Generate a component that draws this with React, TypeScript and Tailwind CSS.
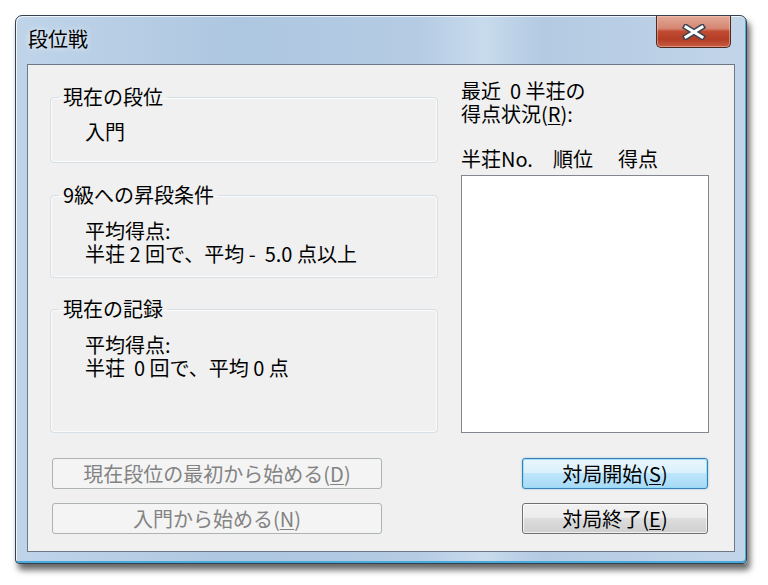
const font = "font-['Noto_Sans_CJK_JP','Liberation_Sans',sans-serif]";

function Mn({ c }: { c: string }) {
  return <span className="underline underline-offset-[2px] decoration-1">{c}</span>;
}

function CloseButton() {
  return (
    <div className="mr-[15px] w-[75px] h-[32px] rounded-b-[5px] border border-t-0 border-[#4a2a22] bg-[linear-gradient(to_bottom,#e3a897_0%,#d58672_40%,#c14a32_50%,#b43d25_75%,#c85c44_100%)] shadow-[inset_0_0_0_1px_rgba(255,210,190,0.45)] flex items-center justify-center">
      <svg width="24" height="16" viewBox="0 0 24 16">
        <path d="M4 3 L20 13 M20 3 L4 13" stroke="#3d4452" strokeWidth="6" strokeLinecap="square" fill="none" />
        <path d="M4 3 L20 13 M20 3 L4 13" stroke="#ffffff" strokeWidth="3" strokeLinecap="square" fill="none" />
      </svg>
    </div>
  );
}

function Group({ title, h, mt, children }: { title: string; h: string; mt: string; children: React.ReactNode }) {
  return (
    <fieldset className={`${h} border border-[#d5dfe5] rounded-[4px] shadow-[inset_0_0_0_1px_rgba(255,255,255,0.7)]`}>
      <legend className="ml-[8px] px-[4px] text-[20px] leading-[22px]">{title}</legend>
      <div className={`${mt} pl-[34px] text-[20px] leading-[23px] whitespace-pre`}>{children}</div>
    </fieldset>
  );
}

export default function App() {
  return (
    <div className={`w-[768px] h-[585px] bg-white pl-[15px] pt-[15px] text-black ${font}`}>
      <div className="w-[732px] h-[549px] flex flex-col rounded-t-[7px] rounded-b-[4px] border border-[#34414e] bg-[linear-gradient(to_right,#bfd4e9_0%,#aec7e0_30%,#b4cbe3_55%,#c8dbed_64%,#b3cae2_72%,#c2d5e9_100%)] shadow-[3px_6px_6px_rgba(0,0,0,0.6),inset_-1px_-2px_0_#4aa9d9,inset_1px_1px_0_rgba(255,255,255,0.75)]">
        <div className="h-[48px] flex items-start justify-between">
          <div className="pl-[12px] pt-[11px] text-[20px] leading-[24px] text-black [text-shadow:0_0_6px_rgba(255,255,255,0.9)]">段位戦</div>
          <CloseButton />
        </div>
        <div className="flex-1 mx-[11px] mb-[11px] border border-[#6b7886] bg-[#f0f0f0] pl-[22px] pt-[16px]">
          <div className="flex">
            <div className="w-[388px] mt-[5px] flex flex-col">
              <Group title="現在の段位" h="h-[77px]" mt="mt-[12px]">入門</Group>
              <div className="h-[21px]" />
              <Group title="9級への昇段条件" h="h-[94px]" mt="mt-[13px]">
                <div>平均得点:</div>
                <div>半荘 2 回で、平均 -&nbsp;&nbsp;5.0 点以上</div>
              </Group>
              <div className="h-[20px]" />
              <Group title="現在の記録" h="h-[135px]" mt="mt-[13px]">
                <div>平均得点:</div>
                <div>半荘&nbsp;&nbsp;0 回で、平均 0 点</div>
              </Group>
            </div>
            <div className="ml-[23px] w-[248px] text-[20px] -mt-[2px]">
              <div className="leading-[23px] whitespace-pre">最近&nbsp;&nbsp;0 半荘の</div>
              <div className="leading-[23px]">得点状況(<Mn c="R" />):</div>
              <div className="mt-[23px] leading-[22px] flex">
                <span className="w-[92px]">半荘No.</span>
                <span className="w-[65px]">順位</span>
                <span>得点</span>
              </div>
              <div className="mt-[5px] h-[258px] bg-white border border-[#828790]" />
            </div>
          </div>
          <div className="mt-[25px] flex">
            <div className="ml-[2px] w-[330px] h-[31px] rounded-[3px] border border-[#adb2b5] bg-[#f4f4f4] text-[#838383] text-[20px] leading-none flex items-center justify-center">
              現在段位の最初から始める(<Mn c="D" />)
            </div>
            <div className="ml-[140px] w-[186px] h-[31px] rounded-[3px] border border-[#3c7fb1] bg-[linear-gradient(to_bottom,#eaf6fd_0%,#d9f0fc_50%,#bee6fd_50%,#a7d9f5_100%)] shadow-[inset_0_0_0_1px_rgba(140,220,250,0.8),0_0_2px_rgba(60,160,220,0.6)] text-[20px] leading-none flex items-center justify-center">
              対局開始(<Mn c="S" />)
            </div>
          </div>
          <div className="mt-[14px] flex">
            <div className="ml-[2px] w-[330px] h-[31px] rounded-[3px] border border-[#adb2b5] bg-[#f4f4f4] text-[#838383] text-[20px] leading-none flex items-center justify-center">
              入門から始める(<Mn c="N" />)
            </div>
            <div className="ml-[140px] w-[186px] h-[31px] rounded-[3px] border border-[#707070] bg-[linear-gradient(to_bottom,#f2f2f2_0%,#ebebeb_50%,#dddddd_50%,#cfcfcf_100%)] shadow-[inset_0_0_0_1px_rgba(255,255,255,0.7)] text-[20px] leading-none flex items-center justify-center">
              対局終了(<Mn c="E" />)
            </div>
          </div>
        </div>
      </div>
    </div>
  );
}
